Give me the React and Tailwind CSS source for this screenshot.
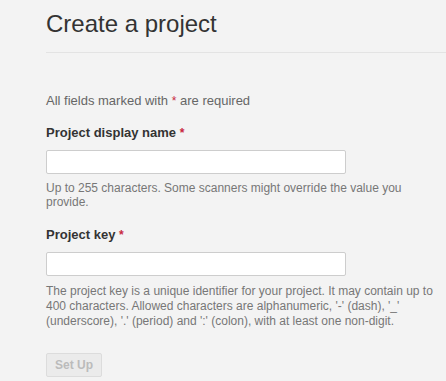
export default function App() {
  return (
    <div className="min-h-[381px] w-[446px] overflow-hidden bg-[#f3f3f3] font-['Liberation_Sans',Arial,sans-serif] text-[#444]">
      <div className="pl-[46px]">
        {/* page header */}
        <h1 className="pt-[10px] text-[24px] font-normal leading-[28px] text-[#333]">Create a project</h1>
        <div className="mt-[14px] border-t border-[#e3e3e3]"></div>

        <form className="flex flex-col" onSubmit={(e) => e.preventDefault()}>
          <p className="mt-[39px] text-[13px] leading-[18px] text-[#666]">
            All fields marked with <span className="text-[12px] text-[#c8283f]">*</span> are required
          </p>

          {/* display name */}
          <label className="mt-[14px] text-[13px] font-bold leading-[18px] text-[#333]">
            Project display name <span className="text-[12px] text-[#c8283f]">*</span>
          </label>
          <input
            type="text"
            className="mt-[8px] h-[24px] w-[300px] rounded-[2px] border border-[#cdcdcd] bg-white px-[6px] text-[13px] outline-none"
          />
          <p className="mt-[7px] w-[395px] text-[12px] leading-[14px] text-[#777]">
            Up to 255 characters. Some scanners might override the value you provide.
          </p>

          {/* key */}
          <label className="mt-[17px] text-[13px] font-bold leading-[18px] text-[#333]">
            Project key <span className="text-[12px] text-[#c8283f]">*</span>
          </label>
          <input
            type="text"
            className="mt-[8px] h-[24px] w-[300px] rounded-[2px] border border-[#cdcdcd] bg-white px-[6px] text-[13px] outline-none"
          />
          <p className="mt-[8px] w-[395px] text-[12px] leading-[15px] text-[#777]">
            The project key is a unique identifier for your project. It may contain up to 400 characters. Allowed
            characters are alphanumeric, '-' (dash), '_' (underscore), '.' (period) and ':' (colon), with at least one
            non-digit.
          </p>

          <div className="mt-[23px]">
            <button
              type="submit"
              disabled
              className="h-[24px] rounded-[2px] border border-[#dcdcdc] bg-[#ebebeb] px-[8px] text-[12px] font-bold leading-[22px] text-[#bbb]"
            >
              Set Up
            </button>
          </div>
        </form>
      </div>
    </div>
  );
}
